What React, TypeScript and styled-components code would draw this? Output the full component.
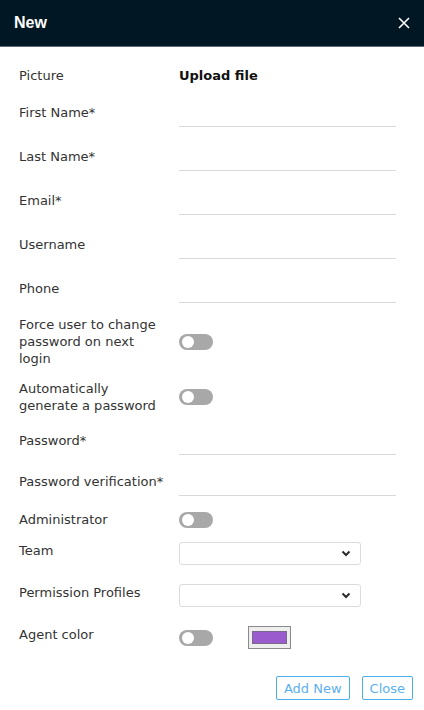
import styled, { createGlobalStyle } from "styled-components";

const GlobalStyle = createGlobalStyle`
  body {
    margin: 0;
    background: #ffffff;
    font-family: "DejaVu Sans", "Noto Sans", sans-serif;
  }
  * {
    box-sizing: border-box;
  }
`;

const Modal = styled.div`
  width: 424px;
  height: 710px;
  background: #ffffff;
  display: flex;
  flex-direction: column;
`;

const Header = styled.div`
  height: 47px;
  background: #011824;
  border-bottom: 1px solid #5d6b74;
  display: flex;
  align-items: center;
  justify-content: space-between;
  padding: 0 12px 0 14px;
`;

const Title = styled.h2`
  margin: 0;
  color: #ffffff;
  font-family: "Liberation Sans", Arial, sans-serif;
  font-size: 16px;
  font-weight: bold;
`;

const CloseIcon = styled.button`
  background: none;
  border: none;
  padding: 0;
  width: 16px;
  height: 16px;
  display: flex;
  align-items: center;
  justify-content: center;
  cursor: pointer;
`;

const Form = styled.div`
  display: flex;
  flex-direction: column;
  padding: 0 28px 0 19px;
`;

const Row = styled.div<{ $mt: number; $h?: number }>`
  display: grid;
  grid-template-columns: 160px 1fr;
  align-items: center;
  margin-top: ${(p) => p.$mt}px;
  min-height: ${(p) => p.$h || 0}px;
`;

const Label = styled.label<{ $pb?: number }>`
  color: #333333;
  font-size: 13px;
  line-height: 17px;
  padding-right: 12px;
  padding-bottom: ${(p) => p.$pb || 0}px;
`;

const UploadText = styled.span`
  font-size: 13px;
  font-weight: bold;
  color: #111111;
`;

const LineInput = styled.input`
  height: 30px;
  border: none;
  border-bottom: 1px solid #d9d9d9;
  outline: none;
  background: transparent;
  width: 100%;
`;

const Switch = styled.div`
  width: 34px;
  height: 16px;
  border-radius: 8px;
  background: #a8a8a8;
  position: relative;
  &::after {
    content: "";
    position: absolute;
    left: 3px;
    top: 2px;
    width: 12px;
    height: 12px;
    border-radius: 50%;
    background: #ffffff;
  }
`;

const Select = styled.div`
  width: 182px;
  height: 23px;
  border: 1px solid #dcdcdc;
  border-radius: 3px;
  display: flex;
  align-items: center;
  justify-content: flex-end;
  padding-right: 9px;
`;

const ColorLine = styled.div`
  display: flex;
  align-items: center;
  gap: 35px;
`;

const Swatch = styled.div`
  width: 43px;
  height: 23px;
  border: 1px solid #8a8a8a;
  background: #eeeeee;
  padding: 4px 3px;
`;

const SwatchFill = styled.div<{ $color: string }>`
  width: 100%;
  height: 100%;
  background: ${(p) => p.$color};
  border: 1px solid #7a6a8a;
`;

const Footer = styled.div`
  display: flex;
  justify-content: flex-end;
  gap: 12px;
  padding: 0 11px 0 0;
  margin-top: 27px;
`;

const Button = styled.button`
  height: 24px;
  padding: 0 7px;
  background: #ffffff;
  border: 1px solid #4aaeea;
  border-radius: 2px;
  color: #5ab0f0;
  font-family: "DejaVu Sans", sans-serif;
  font-size: 13px;
  cursor: pointer;
`;

const Chevron = () => (
  <svg width="10" height="7" viewBox="0 0 10 7">
    <path d="M1.5 1.5 L5 5 L8.5 1.5" fill="none" stroke="#2b2b2b" strokeWidth="2" />
  </svg>
);

const textFields = [
  { label: "First Name*", mt: 12 },
  { label: "Last Name*", mt: 14 },
  { label: "Email*", mt: 14 },
  { label: "Username", mt: 14 },
  { label: "Phone", mt: 14 },
];

function App() {
  return (
    <>
      <GlobalStyle />
      <Modal>
        <Header>
          <Title>New</Title>
          <CloseIcon>
            <svg width="12" height="12" viewBox="0 0 12 12">
              <path d="M1 1 L11 11 M11 1 L1 11" stroke="#ffffff" strokeWidth="1.6" />
            </svg>
          </CloseIcon>
        </Header>
        <Form>
          <Row $mt={18} $h={20}>
            <Label>Picture</Label>
            <UploadText>Upload file</UploadText>
          </Row>
          {textFields.map((f) => (
            <Row $mt={f.mt} key={f.label}>
              <Label>{f.label}</Label>
              <LineInput />
            </Row>
          ))}
          <Row $mt={13}>
            <Label>Force user to change password on next login</Label>
            <Switch />
          </Row>
          <Row $mt={13}>
            <Label>Automatically generate a password</Label>
            <Switch />
          </Row>
          <Row $mt={11}>
            <Label>Password*</Label>
            <LineInput type="password" />
          </Row>
          <Row $mt={11}>
            <Label>Password verification*</Label>
            <LineInput type="password" />
          </Row>
          <Row $mt={15}>
            <Label>Administrator</Label>
            <Switch />
          </Row>
          <Row $mt={14}>
            <Label $pb={6}>Team</Label>
            <Select>
              <Chevron />
            </Select>
          </Row>
          <Row $mt={19}>
            <Label $pb={6}>Permission Profiles</Label>
            <Select>
              <Chevron />
            </Select>
          </Row>
          <Row $mt={19}>
            <Label $pb={6}>Agent color</Label>
            <ColorLine>
              <Switch />
              <Swatch>
                <SwatchFill $color="#9a5bcf" />
              </Swatch>
            </ColorLine>
          </Row>
        </Form>
        <Footer>
          <Button>Add New</Button>
          <Button>Close</Button>
        </Footer>
      </Modal>
    </>
  );
}

export default App;
